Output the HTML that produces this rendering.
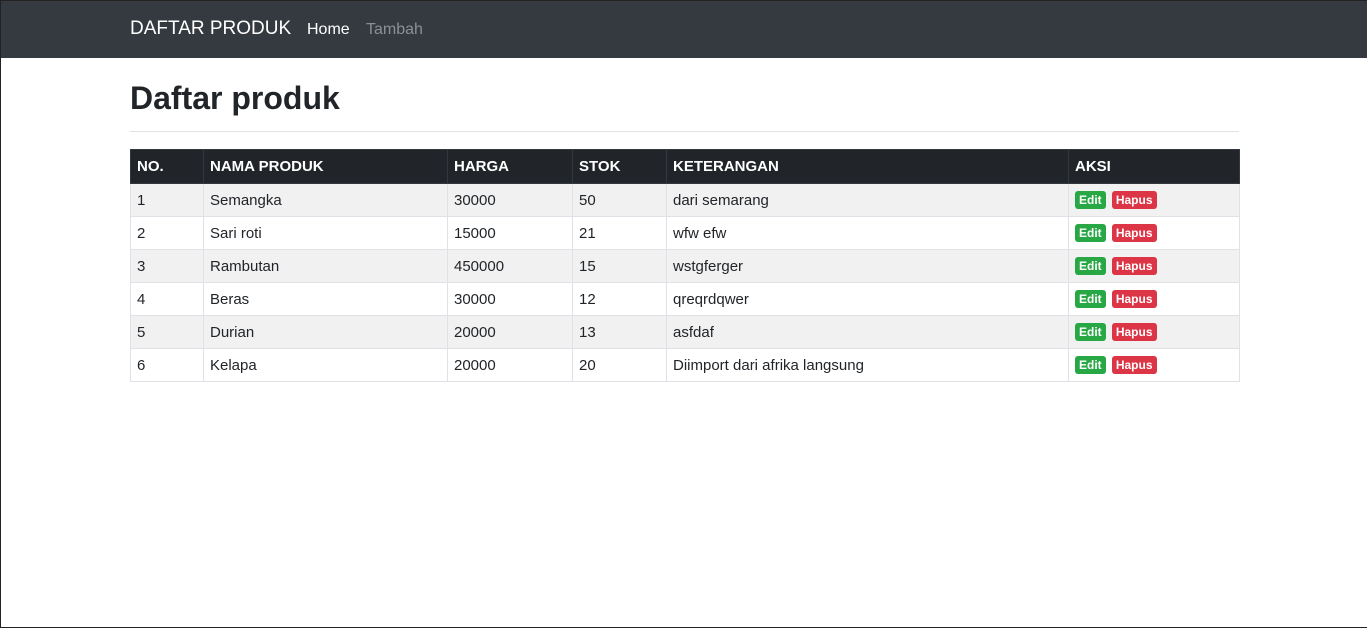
<!DOCTYPE html>
<html><head><style>
*{box-sizing:border-box;margin:0;padding:0}
body{width:1367px;height:628px;background:#fff;font-family:"Liberation Sans",sans-serif;color:#212529;border:1px solid #222;border-right:none;overflow:hidden;position:relative}
.nav{position:absolute;left:0;top:0;width:1367px;height:57px;background:#343a40}
.brand{position:absolute;left:129px;top:17px;font-size:19px;color:#fff}
.l1{position:absolute;left:306px;top:20px;font-size:16px;color:#fff}
.l2{position:absolute;left:365px;top:20px;font-size:16px;color:#8c9096}
h1{position:absolute;left:129px;top:79px;font-size:32px;font-weight:bold;color:#212529}
hr{position:absolute;left:129px;top:130px;width:1109px;border:0;border-top:1px solid #e2e2e4}
table{position:absolute;left:129px;top:148px;width:1110px;border-collapse:collapse;font-size:15px}
th{background:#212529;color:#fff;text-align:left;height:34px;padding:0 6px;border:1px solid #32383e;font-weight:bold}
td{height:33px;padding:0 6px;border:1px solid #dee2e6}
tr:nth-child(odd) td{background:#f1f1f1}
.b{display:inline-block;color:#fff;font-size:12px;font-weight:bold;padding:2px 4px;border-radius:3px;line-height:14px}
.g{background:#28a745}.r{background:#dc3545;margin-left:2px}
</style></head><body>
<div class="nav"><span class="brand">DAFTAR PRODUK</span><span class="l1">Home</span><span class="l2">Tambah</span></div>
<h1>Daftar produk</h1>
<hr>
<table>
<thead><tr><th style="width:73px">NO.</th><th style="width:244px">NAMA PRODUK</th><th style="width:125px">HARGA</th><th style="width:94px">STOK</th><th style="width:402px">KETERANGAN</th><th>AKSI</th></tr></thead>
<tbody>
<tr><td>1</td><td>Semangka</td><td>30000</td><td>50</td><td>dari semarang</td><td><span class="b g">Edit</span> <span class="b r">Hapus</span></td></tr>
<tr><td>2</td><td>Sari roti</td><td>15000</td><td>21</td><td>wfw efw</td><td><span class="b g">Edit</span> <span class="b r">Hapus</span></td></tr>
<tr><td>3</td><td>Rambutan</td><td>450000</td><td>15</td><td>wstgferger</td><td><span class="b g">Edit</span> <span class="b r">Hapus</span></td></tr>
<tr><td>4</td><td>Beras</td><td>30000</td><td>12</td><td>qreqrdqwer</td><td><span class="b g">Edit</span> <span class="b r">Hapus</span></td></tr>
<tr><td>5</td><td>Durian</td><td>20000</td><td>13</td><td>asfdaf</td><td><span class="b g">Edit</span> <span class="b r">Hapus</span></td></tr>
<tr><td>6</td><td>Kelapa</td><td>20000</td><td>20</td><td>Diimport dari afrika langsung</td><td><span class="b g">Edit</span> <span class="b r">Hapus</span></td></tr>
</tbody></table>
</body></html>
